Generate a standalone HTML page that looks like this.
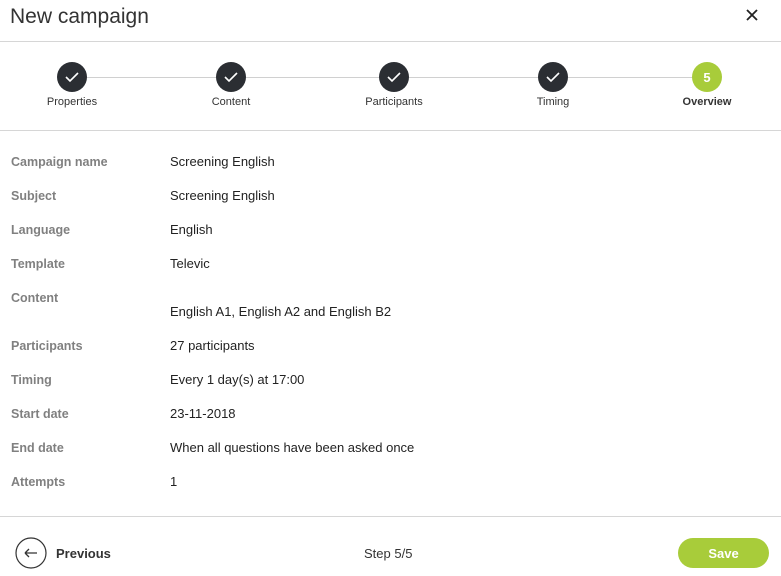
<!DOCTYPE html><html><head><style>
body{margin:0;width:781px;height:576px;background:#fff;font-family:"Liberation Sans",sans-serif;position:relative;overflow:hidden;color:#222}
.a{position:absolute}
.lbl{position:absolute;top:96px;font-size:11px;color:#333;transform:translateX(-50%);white-space:nowrap}
.k{position:absolute;left:11px;font-size:12.5px;font-weight:bold;color:#808080;margin-top:1px}
.v{position:absolute;left:170px;font-size:13px;color:#222}
</style></head><body>
<div class="a" style="left:10px;top:5px;font-size:21px;color:#333">New campaign</div>
<svg class="a" style="left:746px;top:9px" width="12" height="12"><path d="M1 1l10 10M11 1L1 11" stroke="#222" stroke-width="1.8"/></svg>
<div class="a" style="left:0;top:41px;width:781px;height:1px;background:#d6d6d6"></div>
<div class="a" style="left:72px;top:77px;width:635px;height:1px;background:#d0d0d0"></div>
<svg class="a" style="left:0;top:0" width="781" height="130">
<g fill="#2b2e33"><circle cx="72" cy="77" r="15"/><circle cx="231" cy="77" r="15"/><circle cx="394" cy="77" r="15"/><circle cx="553" cy="77" r="15"/></g>
<circle cx="707" cy="77" r="15" fill="#a8cc3a"/>
<g stroke="#fff" stroke-width="1.6" fill="none"><path d="M66 77l4 4 8-8"/><path d="M225 77l4 4 8-8"/><path d="M388 77l4 4 8-8"/><path d="M547 77l4 4 8-8"/></g>
<text x="707" y="82" fill="#fff" font-size="13" font-weight="bold" text-anchor="middle" font-family="Liberation Sans">5</text>
</svg>
<div class="lbl" style="left:72px">Properties</div>
<div class="lbl" style="left:231px">Content</div>
<div class="lbl" style="left:394px">Participants</div>
<div class="lbl" style="left:553px">Timing</div>
<div class="lbl" style="left:707px;font-weight:bold">Overview</div>
<div class="a" style="left:0;top:130px;width:781px;height:1px;background:#d6d6d6"></div>
<div class="k" style="top:154px">Campaign name</div><div class="v" style="top:154px">Screening English</div>
<div class="k" style="top:188px">Subject</div><div class="v" style="top:188px">Screening English</div>
<div class="k" style="top:222px">Language</div><div class="v" style="top:222px">English</div>
<div class="k" style="top:256px">Template</div><div class="v" style="top:256px">Televic</div>
<div class="k" style="top:290px">Content</div><div class="v" style="top:304px">English A1, English A2 and English B2</div>
<div class="k" style="top:338px">Participants</div><div class="v" style="top:338px">27 participants</div>
<div class="k" style="top:372px">Timing</div><div class="v" style="top:372px">Every 1 day(s) at 17:00</div>
<div class="k" style="top:406px">Start date</div><div class="v" style="top:406px">23-11-2018</div>
<div class="k" style="top:440px">End date</div><div class="v" style="top:440px">When all questions have been asked once</div>
<div class="k" style="top:474px">Attempts</div><div class="v" style="top:474px">1</div>
<div class="a" style="left:0;top:516px;width:781px;height:1px;background:#d6d6d6"></div>
<svg class="a" style="left:15px;top:537px" width="32" height="32"><circle cx="16" cy="16" r="15" fill="none" stroke="#333" stroke-width="1.2"/><path d="M10 16h12M10 16l4-4M10 16l4 4" stroke="#333" stroke-width="1.3" fill="none"/></svg>
<div class="a" style="left:56px;top:546px;font-size:13px;font-weight:bold;color:#333">Previous</div>
<div class="a" style="left:364px;top:546px;font-size:13px;color:#333">Step 5/5</div>
<div class="a" style="left:678px;top:538px;width:91px;height:30px;border-radius:15px;background:#a8cc3a;color:#fff;font-size:13px;font-weight:bold;text-align:center;line-height:31px">Save</div>
</body></html>
